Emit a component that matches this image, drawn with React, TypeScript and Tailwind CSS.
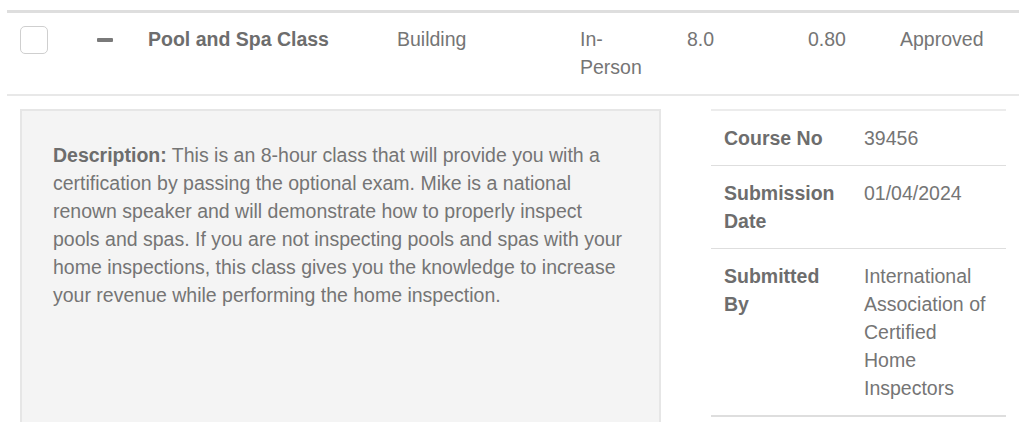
import { Fragment } from "react"

const details = [
  { label: "Course No", value: "39456" },
  { label: "Submission Date", value: "01/04/2024" },
  { label: "Submitted By", value: "International Association of Certified Home Inspectors" },
]

export default function App() {
  return (
    <div className="bg-white w-[1024px] h-[422px] overflow-hidden text-[19.5px] leading-[28px] text-[#757575]" style={{ fontFamily: '"Liberation Sans", Arial, sans-serif' }}>
      <div className="ml-[7px] w-[1012px] mt-[10px] border-t-[3px] border-[#dedede]">
        {/* Course row */}
        <div className="grid grid-cols-[77px_51px_249px_183px_107px_121px_92px_1fr] border-b-2 border-[#e8e8e8]">
          <div className="p-[13px]">
            <div className="w-[28px] h-[28px] rounded-[5px] border border-[#cfcfcf] bg-white" />
          </div>
          <div className="p-[13px] flex items-center h-[53px]">
            <div className="w-[16px] h-[4px] bg-[#7a7a7a] rounded-[1px]" />
          </div>
          <div className="px-[13px] pt-[12px] pb-[13px] font-bold text-[#6d6d6d]">Pool and Spa Class</div>
          <div className="px-[13px] pt-[12px] pb-[13px]">Building</div>
          <div className="px-[13px] pt-[12px] pb-[13px]">
            <div className="w-[66px]">In-Person</div>
          </div>
          <div className="px-[13px] pt-[12px] pb-[13px]">8.0</div>
          <div className="px-[13px] pt-[12px] pb-[13px]">0.80</div>
          <div className="px-[13px] pt-[12px] pb-[13px]">Approved</div>
        </div>

        {/* Expanded details */}
        <div className="flex pl-[13px] pt-[13px]">
          <div className="w-[641px] min-h-[330px] bg-[#f4f4f4] border-2 border-[#e6e6e6] pl-[31px] pr-[31px] pt-[30px]">
            <p>
              <span className="font-bold text-[#6d6d6d]">Description:</span> This is an 8-hour class that will provide you with a certification by passing the optional exam. Mike is a national renown speaker and will demonstrate how to properly inspect pools and spas. If you are not inspecting pools and spas with your home inspections, this class gives you the knowledge to increase your revenue while performing the home inspection.
            </p>
          </div>
          <div className="ml-[50px] w-[295px]">
            <div className="grid grid-cols-[140px_1fr] border-t-2 border-[#ececec]">
              {details.map((d, i) => (
                <Fragment key={d.label}>
                  <div className={`py-[13px] pl-[13px] pr-[10px] font-bold text-[#6d6d6d] border-[#dedede] ${i < details.length - 1 ? "border-b" : "border-b-2"}`}>
                    {d.label}
                  </div>
                  <div className={`py-[13px] pl-[13px] pr-[13px] border-[#dedede] ${i < details.length - 1 ? "border-b" : "border-b-2"}`}>
                    {d.value}
                  </div>
                </Fragment>
              ))}
            </div>
          </div>
        </div>
      </div>
    </div>
  )
}
